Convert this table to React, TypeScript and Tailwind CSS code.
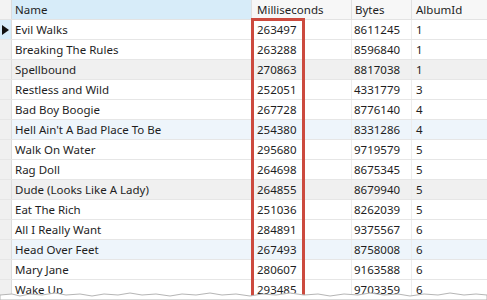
import React from "react";

interface Track {
  name: string;
  ms: number;
  bytes: number;
  albumId: number;
}

const tracks: Track[] = [
  { name: "Evil Walks", ms: 263497, bytes: 8611245, albumId: 1 },
  { name: "Breaking The Rules", ms: 263288, bytes: 8596840, albumId: 1 },
  { name: "Spellbound", ms: 270863, bytes: 8817038, albumId: 1 },
  { name: "Restless and Wild", ms: 252051, bytes: 4331779, albumId: 3 },
  { name: "Bad Boy Boogie", ms: 267728, bytes: 8776140, albumId: 4 },
  { name: "Hell Ain't A Bad Place To Be", ms: 254380, bytes: 8331286, albumId: 4 },
  { name: "Walk On Water", ms: 295680, bytes: 9719579, albumId: 5 },
  { name: "Rag Doll", ms: 264698, bytes: 8675345, albumId: 5 },
  { name: "Dude (Looks Like A Lady)", ms: 264855, bytes: 8679940, albumId: 5 },
  { name: "Eat The Rich", ms: 251036, bytes: 8262039, albumId: 5 },
  { name: "All I Really Want", ms: 284891, bytes: 9375567, albumId: 6 },
  { name: "Head Over Feet", ms: 267493, bytes: 8758008, albumId: 6 },
  { name: "Mary Jane", ms: 280607, bytes: 9163588, albumId: 6 },
  { name: "Wake Up", ms: 293485, bytes: 9703359, albumId: 6 },
];

const cols = "grid grid-cols-[12px_240px_100px_60px_75px]";

function rowBg(i: number) {
  if (i % 6 === 2) return "bg-[#f0f0f0]";
  if (i % 6 === 5) return "bg-[#eef5fb]";
  return "bg-white";
}

export default function App() {
  return (
    <div
      className="relative w-[487px] h-[300px] overflow-hidden bg-white text-[11.5px] text-[#1e1e1e]"
      style={{ fontFamily: '"Noto Sans", "Open Sans", sans-serif' }}
    >
      {/* header */}
      <div className={`${cols} h-[20px] border-b border-[#e3e3e3] leading-[19px]`}>
        <div className="bg-[#f3f3f3] border-r border-[#dcdcdc]" />
        <div className="bg-[#d7ecf9] pl-[3px] border-r border-[#e0e0e0]">Name</div>
        <div className="bg-[#f7f7f7] pl-[5px] border-r border-[#e0e0e0]">Milliseconds</div>
        <div className="bg-[#f7f7f7] pl-[3px] border-r border-[#e0e0e0]">Bytes</div>
        <div className="bg-[#f7f7f7] pl-[4px]">AlbumId</div>
      </div>

      {tracks.map((t, i) => (
        <div
          key={t.name}
          className={`${cols} h-[20px] border-b border-[#e6e6e6] leading-[19px] ${rowBg(i)}`}
        >
          <div
            className={`flex items-center border-r border-[#dcdcdc] ${
              i === 0 ? "bg-[#d7ecf9]" : "bg-[#f0f0f0]"
            }`}
          >
            {i === 0 && (
              <svg width="8" height="10" viewBox="0 0 8 10" className="ml-[2px]">
                <path d="M0 0 L7 5 L0 10 Z" fill="#111" />
              </svg>
            )}
          </div>
          <div className="pl-[3px] whitespace-nowrap">{t.name}</div>
          <div className="pl-[5px] border-r border-[#ececec]">{t.ms}</div>
          <div className="pl-[2px] border-r border-[#ececec]">{t.bytes}</div>
          <div className="pl-[4px]">{t.albumId}</div>
        </div>
      ))}

      {/* highlight around Milliseconds column */}
      <div className="absolute left-[251px] top-[18px] w-[54px] h-[300px] border-[3px] border-[#cc4a3e]" />

      {/* torn paper edge */}
      <svg
        className="absolute left-0 bottom-0"
        width="487"
        height="10"
        viewBox="0 0 487 10"
      >
        <path
          d="M0 5 L12 4 L20 6 L30 4 L42 5 L55 3 L66 5 L80 4 L92 6 L104 4 L118 5 L130 3 L142 5 L156 4 L170 6 L182 4 L196 5 L210 3 L222 5 L236 4 L250 6 L262 4 L276 5 L290 3 L304 5 L318 4 L330 6 L344 4 L358 5 L370 3 L384 5 L398 4 L410 6 L424 4 L438 5 L450 3 L464 5 L476 4 L487 5 L487 10 L0 10 Z"
          fill="#ffffff"
          stroke="#b5b5b5"
          strokeWidth="1"
        />
      </svg>
    </div>
  );
}
